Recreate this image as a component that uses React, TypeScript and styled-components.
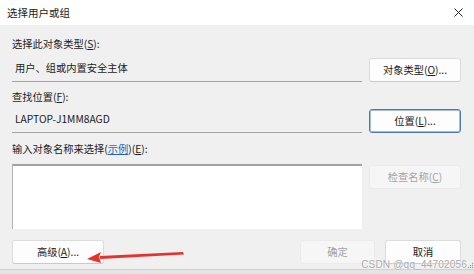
import React from "react";
import styled, { createGlobalStyle, css } from "styled-components";

const Global = createGlobalStyle`
  html, body { margin: 0; padding: 0; background: #e4e4e4; }
  body { width: 474px; height: 274px; overflow: hidden; }
  * { box-sizing: border-box; }
`;

const FONT = `"Noto Sans CJK SC", "Noto Sans", sans-serif`;

const Window = styled.div`
  position: relative;
  width: 474px;
  height: 270px;
  background: #f0f0f0;
  border-bottom: 1px solid #cfcfcf;
  display: flex;
  flex-direction: column;
  font-family: ${FONT};
  font-size: 10.25px;
  color: #1b1b1b;
`;

const TitleBar = styled.div`
  height: 25px;
  flex: none;
  background: #ffffff;
  display: flex;
  align-items: center;
  justify-content: space-between;
  padding: 0 11px 0 7px;
`;

const Title = styled.span`
  font-size: 10.5px;
  line-height: 14px;
  color: #1a1a1a;
`;

const CloseIcon = styled.svg`
  width: 9px;
  height: 9px;
  display: block;
`;

const Body = styled.div`
  display: flex;
  flex-direction: column;
  padding: 12px 13px 0 12px;
`;

const Label = styled.div<{ $top?: number }>`
  line-height: 14px;
  height: 14px;
  margin-top: ${(p) => p.$top ?? 0}px;
  white-space: nowrap;
`;

const Row = styled.div<{ $top: number }>`
  display: grid;
  grid-template-columns: 350px 92px;
  column-gap: 7px;
  align-items: start;
  margin-top: ${(p) => p.$top}px;
`;

const Field = styled.div`
  height: 24px;
  padding: 3px 0 0 3px;
  line-height: 14px;
  border-bottom: 1px solid #a3a3a3;
  white-space: nowrap;
`;

const TextArea = styled.div`
  height: 65px;
  background: #ffffff;
  border-top: 2px solid #a2a2a2;
  border-left: 1px solid #b4b4b4;
`;

const Button = styled.div<{ $w?: number; $disabled?: boolean; $focused?: boolean; $offset?: number }>`
  width: ${(p) => p.$w ?? 92}px;
  height: 24px;
  margin-top: ${(p) => p.$offset ?? 0}px;
  display: flex;
  align-items: center;
  justify-content: center;
  padding-bottom: 1px;
  border-radius: 3px;
  background: #fdfdfd;
  border: 1px solid #dcdcdc;
  border-bottom-color: #c9c9c9;
  line-height: 12px;
  white-space: nowrap;
  color: #1b1b1b;
  ${(p) =>
    p.$disabled &&
    css`
      background: #f6f6f6;
      border-color: #ebebeb;
      color: #a3a3a3;
    `}
  ${(p) =>
    p.$focused &&
    css`
      border: 1px solid #4e7aa8;
      box-shadow: inset 0 0 0 1px #a6bcd6;
    `}
`;

const Link = styled.span`
  color: #1f66b8;
  text-decoration: underline;
`;

const BottomRow = styled.div`
  display: flex;
  justify-content: space-between;
  margin-top: 11px;
`;

const ButtonGroup = styled.div`
  display: flex;
  gap: 10px;
`;

const Arrow = styled.svg`
  position: absolute;
  left: 84px;
  top: 248px;
  width: 104px;
  height: 16px;
  overflow: visible;
`;

const Watermark = styled.div`
  position: absolute;
  right: 7px;
  top: 259px;
  font-family: "Liberation Sans", Arial, sans-serif;
  font-size: 10px;
  line-height: 11px;
  color: #a8a8a8;
  letter-spacing: 0.2px;
  text-shadow: 0 0 2px #ffffff, 0 0 1px #ffffff;
`;

const Grip = styled.svg`
  position: absolute;
  right: 0;
  bottom: 0;
  width: 8px;
  height: 8px;
`;

export default function App() {
  return (
    <>
      <Global />
      <Window>
        <TitleBar>
          <Title>选择用户或组</Title>
          <CloseIcon viewBox="0 0 9 9">
            <path d="M0.5 0.5 L8.5 8.5 M8.5 0.5 L0.5 8.5" stroke="#222" strokeWidth="1" fill="none" />
          </CloseIcon>
        </TitleBar>
        <Body>
          <Label>
            选择此对象类型(<u>S</u>):
          </Label>
          <Row $top={7}>
            <Field>用户、组或内置安全主体</Field>
            <Button>
              对象类型(<u>O</u>)...
            </Button>
          </Row>
          <Label $top={8}>
            查找位置(<u>F</u>):
          </Label>
          <Row $top={5}>
            <Field>LAPTOP-J1MM8AGD</Field>
            <Button $focused>
              位置(<u>L</u>)...
            </Button>
          </Row>
          <Label $top={9}>
            输入对象名称来选择(<Link>示例</Link>)(<u>E</u>):
          </Label>
          <Row $top={8}>
            <TextArea />
            <Button $disabled $offset={1}>
              检查名称(<u>C</u>)
            </Button>
          </Row>
          <BottomRow>
            <Button>
              高级(<u>A</u>)...
            </Button>
            <ButtonGroup>
              <Button $w={75} $disabled>
                确定
              </Button>
              <Button $w={76}>取消</Button>
            </ButtonGroup>
          </BottomRow>
        </Body>
        <Arrow viewBox="0 0 104 16">
          <polygon points="99,4 16,8 16,11 100,6.5" fill="#e5322d" />
          <polygon points="3,11 17,4 15,9 17,15" fill="#e5322d" />
        </Arrow>
        <Watermark>CSDN @qq_44702056</Watermark>
        <Grip viewBox="0 0 8 8">
          <circle cx="6.5" cy="2.5" r="0.7" fill="#9a9a9a" />
          <circle cx="4.5" cy="4.5" r="0.7" fill="#9a9a9a" />
          <circle cx="6.5" cy="4.5" r="0.7" fill="#9a9a9a" />
          <circle cx="2.5" cy="6.5" r="0.7" fill="#9a9a9a" />
          <circle cx="4.5" cy="6.5" r="0.7" fill="#9a9a9a" />
          <circle cx="6.5" cy="6.5" r="0.7" fill="#9a9a9a" />
        </Grip>
      </Window>
    </>
  );
}
